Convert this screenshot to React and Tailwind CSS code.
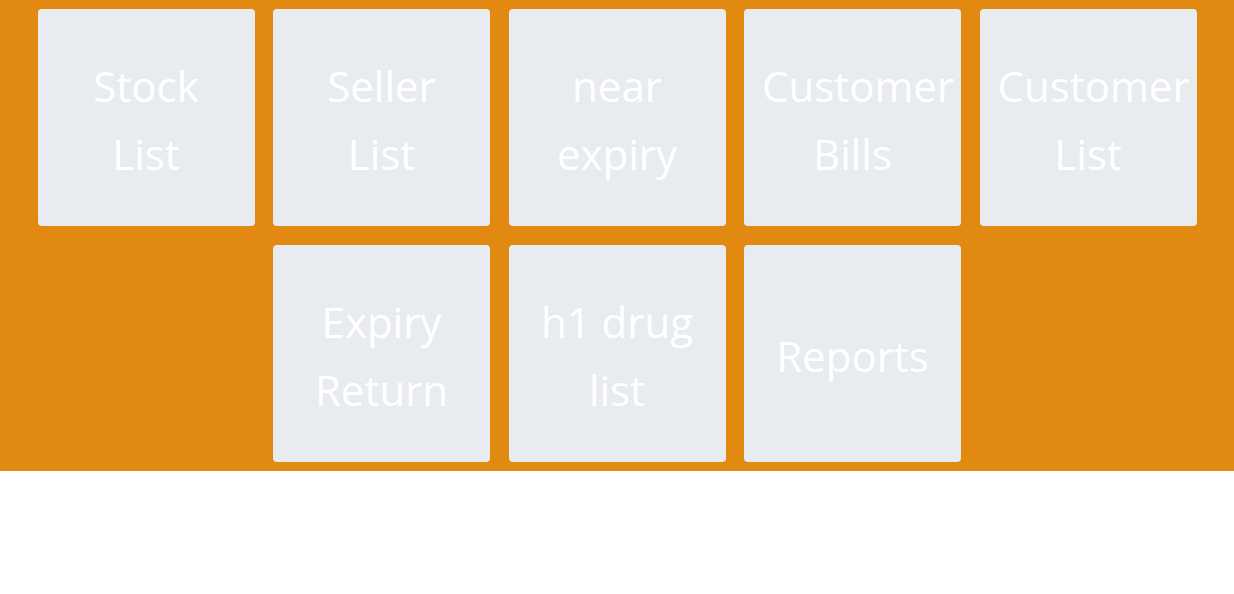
import React from "react";

const tiles = [
  "Stock List",
  "Seller List",
  "near expiry",
  "Customer Bills",
  "Customer List",
  "Expiry Return",
  "h1 drug list",
  "Reports",
];

const Tile = ({ label }) => (
  <div className="w-[217px] h-[217px] rounded-[4px] bg-[#e8ebf0] flex items-center justify-center px-[18px] pt-[4px]">
    <span className="block w-full text-center text-white text-[42px] leading-[68px] font-['Open_Sans',sans-serif]">
      {label}
    </span>
  </div>
);

export default function App() {
  return (
    <div className="w-full min-h-[594px] bg-white">
      <div className="bg-[#e28912] flex flex-wrap justify-center gap-x-[18.5px] gap-y-[19px] py-[9px]">
        {tiles.map((t) => (
          <Tile key={t} label={t} />
        ))}
      </div>
    </div>
  );
}
